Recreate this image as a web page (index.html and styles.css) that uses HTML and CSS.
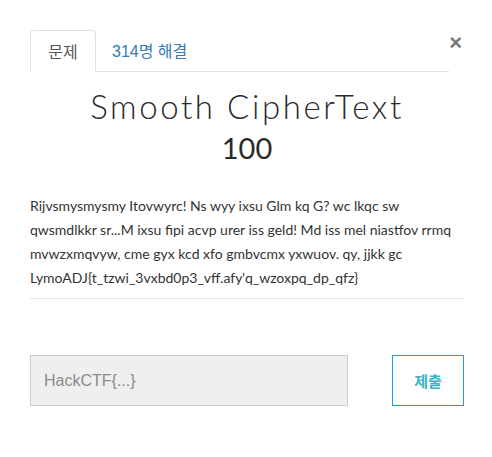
FILE: index.html
```html
<!DOCTYPE html>
<html lang="ko">
<head>
<meta charset="utf-8">
<link rel="stylesheet" href="styles.css">
</head>
<body>
<div class="modal">
  <div class="tabs-row">
    <ul class="tabs">
      <li class="tab active">문제</li>
      <li class="tab link">314명 해결</li>
    </ul>
    <button class="close" aria-label="close">×</button>
  </div>
  <h2 class="title">Smooth CipherText</h2>
  <h3 class="points">100</h3>
  <p class="desc">Rijvsmysmysmy Itovwyrc! Ns wyy ixsu Glm kq G? wc lkqc sw qwsmdlkkr sr...M ixsu fipi acvp urer iss geld! Md iss mel niastfov rrmq mvwzxmqvyw, cme gyx kcd xfo gmbvcmx yxwuov. qy, jjkk gc LymoADJ{t_tzwi_3vxbd0p3_vff.afy'q_wzoxpq_dp_qfz}</p>
  <hr class="sep">
  <form class="submit-row">
    <input class="flag" type="text" placeholder="HackCTF{...}">
    <button class="submit" type="button">제출</button>
  </form>
</div>
</body>
</html>
```
FILE: styles.css
```css
* { box-sizing: border-box; }
html, body { margin: 0; padding: 0; background: #fff; }
body { font-family: Lato, "Noto Sans CJK KR", sans-serif; color: #333; }
.modal { padding: 30px 28px 0 30px; width: 492px; }
.tabs-row { display: flex; align-items: flex-start; }
.tabs { list-style: none; margin: 0; padding: 0; display: flex; width: 420px; border-bottom: 1px solid #dee2e6; height: 42px; }
.tab { font-family: "Liberation Sans", "Noto Sans CJK KR", sans-serif; font-size: 16px; height: 42px; line-height: 44px; padding: 0 17px; }
.tab.active { color: #555; border: 1px solid #dee2e6; border-bottom-color: #fff; border-radius: 4px 4px 0 0; height: 42px; margin-bottom: -1px; background: #fff; width: 66px; padding: 0; text-align: center; }
.tab.link { color: #337ab7; padding-left: 16px; }
.close { margin-left: auto; background: none; border: 0; padding: 0; font-family: "Liberation Sans", sans-serif; font-size: 22px; font-weight: bold; color: #777; line-height: 1; margin-top: 2px; margin-right: 2px; }
.title { margin: 14px 0 0; text-align: center; font-weight: 300; font-size: 33px; letter-spacing: 2.6px; line-height: 40px; color: #2a2a2a; }
.points { margin: 4px 0 0; text-align: center; font-weight: 400; font-size: 29px; line-height: 36px; color: #2a2a2a; }
.desc { margin: 28px 0 0; font-size: 14px; line-height: 24px; color: #333; width: 434px; }
.sep { margin: 8px 0 0; border: 0; border-top: 1px solid #e5e5e5; width: 434px; }
.submit-row { display: flex; margin-top: 56px; width: 434px; }
.flag { width: 318px; height: 51px; background: #efefef; border: 1px solid #ccc; padding: 0 13px; font-family: "Liberation Sans", sans-serif; font-size: 16px; color: #333; }
.flag::placeholder { color: #8a8a8a; }
.submit { margin-left: auto; width: 72px; height: 51px; background: #fff; border: 1px solid #2196f3; color: #3bb3c3; font-family: "Noto Sans CJK KR", sans-serif; font-weight: 700; font-size: 15px; }
```
